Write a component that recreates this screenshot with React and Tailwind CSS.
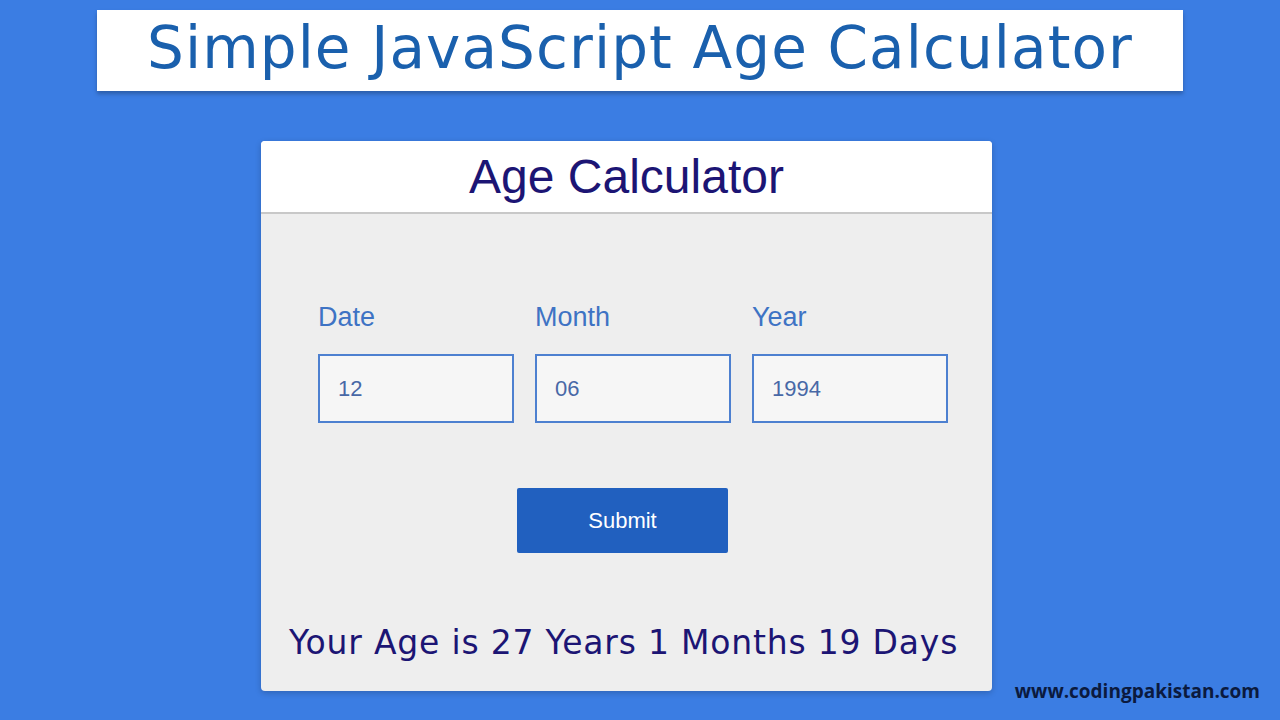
import { useState } from 'react';

export default function App() {
  const [date, setDate] = useState('12');
  const [month, setMonth] = useState('06');
  const [year, setYear] = useState('1994');

  const fields = [
    { label: 'Date', value: date, set: setDate },
    { label: 'Month', value: month, set: setMonth },
    { label: 'Year', value: year, set: setYear },
  ];

  return (
    <div className="relative w-full h-[720px] overflow-hidden bg-[#3b7de3]">
      {/* Banner */}
      <div className="pt-[10px] pl-[97px]">
        <div className="w-[1086px] h-[81px] bg-white shadow-[0_3px_4px_rgba(0,0,0,0.25)] flex items-center justify-center">
          <h1 className="text-[#1a60ad] text-[58px] leading-none font-['DejaVu_Sans',sans-serif] tracking-[1.1px] -mt-[6px]">
            Simple JavaScript Age Calculator
          </h1>
        </div>
      </div>

      {/* Card */}
      <div className="mt-[50px] ml-[261px] w-[731px] h-[550px] bg-[#eeeeee] rounded-[4px] overflow-hidden shadow-[0_2px_6px_rgba(0,0,0,0.2)] font-['Liberation_Sans',Arial,sans-serif]">
        <div className="h-[73px] bg-white border-b-2 border-[#c8c8c8] flex items-center justify-center">
          <h2 className="text-[#1c1574] text-[48px] leading-none">Age Calculator</h2>
        </div>

        <div className="pt-[90px] pl-[57px] flex gap-[21px]">
          {fields.map((f) => (
            <div key={f.label} className="flex flex-col w-[196px]">
              <label className="text-[#3e73c4] text-[27px] leading-none mb-[23px]">{f.label}</label>
              <input
                value={f.value}
                onChange={(e) => f.set(e.target.value)}
                className="h-[69px] bg-[#f6f6f6] border-2 border-[#4d80d0] px-[18px] text-[22px] text-[#4868a6] outline-none"
              />
            </div>
          ))}
        </div>

        <div className="mt-[65px] flex pl-[256px]">
          <button className="w-[211px] h-[65px] bg-[#2160bf] rounded-[2px] text-white text-[22px]">
            Submit
          </button>
        </div>

        <p className="mt-[73px] pl-[28px] text-[#1c1574] text-[33px] leading-none tracking-[0.8px] font-['DejaVu_Sans',sans-serif]">
          Your Age is 27 Years 1 Months 19 Days
        </p>
      </div>

      <div className="absolute right-[20px] bottom-[15px] text-[#0b1a3e] text-[19px] font-bold font-['Open_Sans',sans-serif]">
        www.codingpakistan.com
      </div>
    </div>
  );
}
